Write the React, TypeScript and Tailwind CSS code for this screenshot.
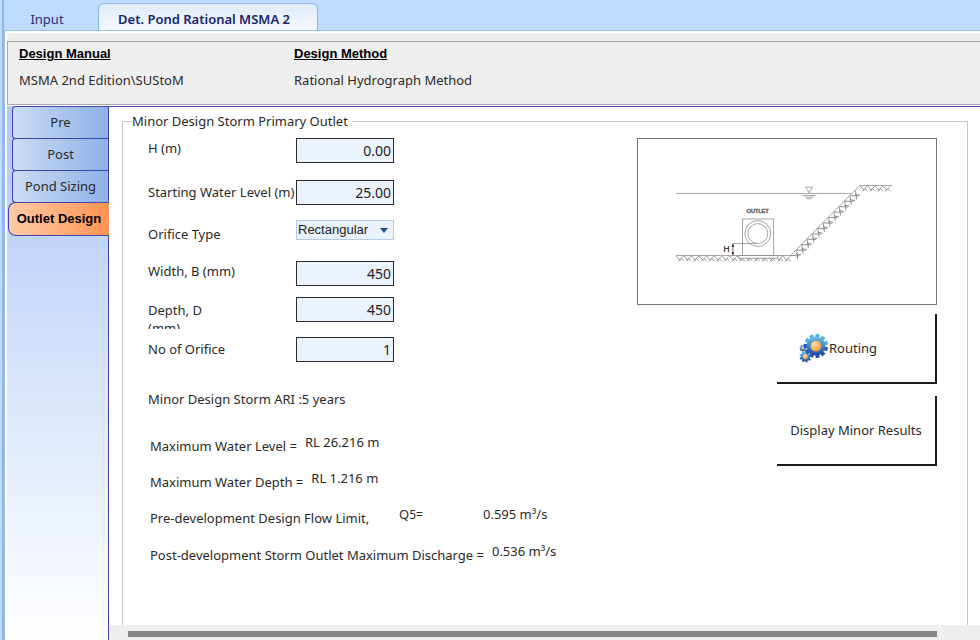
import { useState } from "react";
import type { ReactNode } from "react";

const sideTabs = [
  { id: "pre", label: "Pre" },
  { id: "post", label: "Post" },
  { id: "sizing", label: "Pond Sizing" },
  { id: "outlet", label: "Outlet Design" },
];

const inputClass =
  "h-[25px] w-[98px] border border-[#2b2b30] bg-[#eaf2fd] px-0.5 text-right text-sm text-[#222]";

// Ground hatching drawn along the x axis, soil side is +y
function Hatch({ length, transform, depth = 18 }: { length: number; transform: string; depth?: number }) {
  const marks: number[] = [];
  for (let x = 0; x + 20 < length; x += 23) marks.push(x);

  return (
    <g transform={transform}>
      <path d={`M0 0H${length}`} />
      {marks.map((x) => (
        <path
          key={x}
          d={`M${x + 1} 1l${depth - 5} ${depth - 3}M${x + 23} 2L${x + 7} ${depth}M${x + 15} 9l9 ${depth - 10}`}
          stroke="#666"
        />
      ))}
    </g>
  );
}

function OutletDiagram() {
  return (
    <svg viewBox="22 26 898 498" className="block w-full" fill="none" stroke="#777" strokeWidth="2" role="img" aria-label="Outlet section">
      <path d="M136 190H664" />
      <path d="M527 171h21l-10 17zM517 196h42M524 201h28M530 206h16" />
      <Hatch length={348} transform="translate(136 377)" />
      <Hatch length={296} transform="translate(482 377) rotate(-45.4)" depth={23} />
      <Hatch length={98} transform="translate(690 166)" />
      <rect x="337" y="267" width="94" height="110" />
      <rect x="326" y="377" width="116" height="8" fill="#fff" />
      <circle cx="383" cy="311" r="39" />
      <circle cx="383" cy="311" r="30" />
      <path d="M306 341H376" />
      <path d="M308 344V374" stroke="#222" />
      <path d="M308 341l-4 10h8zM308 377l-4-10h8z" fill="#222" stroke="none" />
      <text x="349" y="249" fontSize="17" fill="#333" fontFamily="Liberation Sans, sans-serif">
        OUTLET
      </text>
      <text x="280" y="366" fontSize="25" fill="#111" stroke="#111" strokeWidth="0.5" fontFamily="Liberation Sans, sans-serif">
        H
      </text>
    </svg>
  );
}

function Gear({ x, y, r, teeth }: { x: number; y: number; r: number; teeth: number }) {
  const t = r * 0.34;
  return (
    <g transform={`translate(${x} ${y})`}>
      {Array.from({ length: teeth }, (_, i) => (
        <rect
          key={i}
          x={-t / 2}
          y={-r}
          width={t}
          height={r}
          fill={i > teeth * 0.25 && i < teeth * 0.75 ? "#2556ae" : "#56b0e0"}
          transform={`rotate(${(360 / teeth) * i + 8})`}
        />
      ))}
      <circle r={r * 0.78} fill="url(#gearBlue)" />
      <circle r={r * 0.48} fill="url(#gearOrange)" stroke="#3d7cc4" strokeWidth="0.5" />
    </g>
  );
}

function GearsIcon() {
  return (
    <svg viewBox="0 0 30 30" className="h-[30px] w-[30px] shrink-0" aria-hidden="true">
      <defs>
        <linearGradient id="gearBlue" x1="0" y1="0" x2="0" y2="1">
          <stop offset="0" stopColor="#66c0ea" />
          <stop offset="0.5" stopColor="#3c8ad0" />
          <stop offset="1" stopColor="#1c46a4" />
        </linearGradient>
        <radialGradient id="gearOrange" cx="0.4" cy="0.35" r="0.7">
          <stop offset="0" stopColor="#ffe9c4" />
          <stop offset="0.5" stopColor="#ffb766" />
          <stop offset="1" stopColor="#ee8d2e" />
        </radialGradient>
      </defs>
      <Gear x={4} y={15} r={3.6} teeth={8} />
      <Gear x={6.5} y={23.5} r={6} teeth={9} />
      <Gear x={17} y={13} r={12} teeth={11} />
    </svg>
  );
}

interface FieldProps {
  id: string;
  label: string;
  rowClass: string;
  labelClass?: string;
  children: ReactNode;
}

function Field({ id, label, rowClass, labelClass = "", children }: FieldProps) {
  return (
    <div className={`flex items-start ${rowClass}`}>
      <div className="w-[148px] shrink-0">
        <label htmlFor={id} className={`block leading-5 whitespace-nowrap ${labelClass}`}>
          {label}
        </label>
      </div>
      {children}
    </div>
  );
}

function Result({ label, children }: { label: string; children: ReactNode }) {
  return (
    <div className="flex h-9 items-start gap-2 leading-5 whitespace-nowrap">
      <span className="pt-1">{label}</span>
      {children}
    </div>
  );
}

export default function App() {
  const [active, setActive] = useState("outlet");

  return (
    <div className="flex h-screen flex-col overflow-hidden bg-[#bfdbff] font-['Noto_Sans','Open_Sans',sans-serif] text-[13px] text-[#2a2a2a]">
      <div className="ml-0.5 flex min-h-0 flex-1 flex-col border-l-2 border-[#8fb6ea]">
        <nav className="flex h-[30px] shrink-0 items-end text-[#1f2f7c]">
          <button className="h-[22px] w-[94px] pr-2 leading-5">Input</button>
          <button className="h-[27px] w-[220px] rounded-t-md border border-b-0 border-[#8db5ea] bg-gradient-to-b from-[#dfebfa] to-[#f5f9fe] pt-1.5 pr-2 font-semibold text-[#15256f]">
            Det. Pond Rational MSMA 2
          </button>
        </nav>

        <div className="flex min-h-0 flex-1 flex-col border-t border-l border-[#9cc0ee] bg-white pt-0.5 pl-0.5">
          <header className="mb-px shrink-0 bg-[#efefef] pt-2">
            <div className="grid h-16 grid-cols-[275px_1fr] border border-r-0 border-[#a8a8a8] pl-[11px]">
              <div>
                <h2 className="pt-1 font-['Liberation_Sans',Arial,sans-serif] leading-4 font-bold text-black underline">Design Manual</h2>
                <p className="pt-2 leading-5">MSMA 2nd Edition\SUStoM</p>
              </div>
              <div>
                <h2 className="pt-1 font-['Liberation_Sans',Arial,sans-serif] leading-4 font-bold text-black underline">Design Method</h2>
                <p className="pt-2 leading-5">Rational Hydrograph Method</p>
              </div>
            </div>
          </header>

          <div className="flex min-h-0 flex-1">
            <aside className="flex w-[102px] shrink-0 flex-col items-end border-r border-[#4343b0] bg-gradient-to-b from-[#adc7f7] to-white">
              {sideTabs.map((tab) => (
                <button
                  key={tab.id}
                  onClick={() => setActive(tab.id)}
                  className={
                    active === tab.id
                      ? "-mr-px h-[34px] w-[101px] rounded-l-lg border border-r-0 border-[#4343b0] bg-gradient-to-r from-[#ffcba6] to-[#ff9350] font-['Liberation_Sans',Arial,sans-serif] font-bold text-black"
                      : "-mb-px h-[33px] w-24 rounded-l-sm border border-r-0 border-[#4343b0] bg-gradient-to-r from-[#cbdcf5] to-[#8eb1e6]"
                  }
                >
                  {tab.label}
                </button>
              ))}
            </aside>

            <main className="flex min-w-0 flex-1 flex-col border-t border-[#4343b0] bg-white">
              <div className="flex min-h-0 flex-1 pt-1 pr-3 pl-[13px]">
                <fieldset className="flex-1 border border-b-0 border-[#c8c8c8] pr-[30px] pl-[25px]">
                  <legend className="-ml-4 pr-1 leading-5">
                    Minor Design Storm Primary Outlet
                  </legend>
                  <div className="flex items-start justify-between pt-[7px]">
                    <div>
                      <Field id="h" label="H (m)" rowClass="h-[42px]">
                        <input id="h" className={inputClass} defaultValue="0.00" />
                      </Field>
                      <Field id="level" label="Starting Water Level (m)" rowClass="h-10" labelClass="pt-0.5">
                        <input id="level" className={inputClass} defaultValue="25.00" />
                      </Field>
                      <Field id="type" label="Orifice Type" rowClass="h-[41px]" labelClass="pt-1">
                        <div className="relative">
                          <select
                            id="type"
                            className="block h-5 w-[98px] appearance-none border border-[#b3ccec] bg-[#eaf2fd] pl-px font-['Liberation_Sans',Arial,sans-serif] leading-4 text-[#222]"
                          >
                            <option>Rectangular</option>
                            <option>Circular</option>
                          </select>
                          <svg viewBox="0 0 8 5" className="pointer-events-none absolute top-2 right-1.5 h-[5px] w-2" aria-hidden="true">
                            <path d="M0 0h8L4 5z" fill="#174aa0" />
                          </svg>
                        </div>
                      </Field>
                      <Field id="width" label="Width, B (mm)" rowClass="h-9">
                        <input id="width" className={inputClass} defaultValue="450" />
                      </Field>
                      <Field
                        id="depth"
                        label="Depth, D (mm)"
                        rowClass="h-10"
                        labelClass="mt-1 h-7 w-[68px] overflow-hidden leading-[18px]! whitespace-normal!"
                      >
                        <input id="depth" className={inputClass} defaultValue="450" />
                      </Field>
                      <Field id="count" label="No of Orifice" rowClass="h-[52px]" labelClass="pt-0.5">
                        <input id="count" className={inputClass} defaultValue="1" />
                      </Field>

                      <p className="h-[42px] leading-5">Minor Design Storm ARI :5 years</p>

                      <div className="pt-px pl-0.5">
                        <Result label="Maximum Water Level =">
                          <span>RL 26.216 m</span>
                        </Result>
                        <Result label="Maximum Water Depth =">
                          <span>RL 1.216 m</span>
                        </Result>
                        <div className="flex h-[37px] items-start leading-5 whitespace-nowrap">
                          <span className="w-[249px] pt-1">Pre-development Design Flow Limit,</span>
                          <span className="w-[84px]">
                            Q<span className="text-xs">5=</span>
                          </span>
                          <span>0.595 m³/s</span>
                        </div>
                        <Result label="Post-development Storm Outlet Maximum Discharge =">
                          <span>0.536 m³/s</span>
                        </Result>
                      </div>
                    </div>

                    <div className="flex w-[300px] shrink-0 flex-col items-end">
                      <div className="w-full border border-[#777]">
                        <OutletDiagram />
                      </div>
                      <button className="mt-[9px] flex h-[70px] w-40 items-center border-r-2 border-b-2 border-[#1c1c1c] pl-[22px]">
                        <GearsIcon />
                        Routing
                      </button>
                      <button className="mt-3 h-[70px] w-40 border-r-2 border-b-2 border-[#1c1c1c] whitespace-nowrap">
                        Display Minor Results
                      </button>
                    </div>
                  </div>
                </fieldset>
              </div>
              <div className="h-[15px] shrink-0 bg-[#efefef] pt-1.5 pr-[43px] pl-[19px]">
                <div className="h-[6px] bg-[#868686]" />
              </div>
            </main>
          </div>
        </div>
      </div>
    </div>
  );
}
